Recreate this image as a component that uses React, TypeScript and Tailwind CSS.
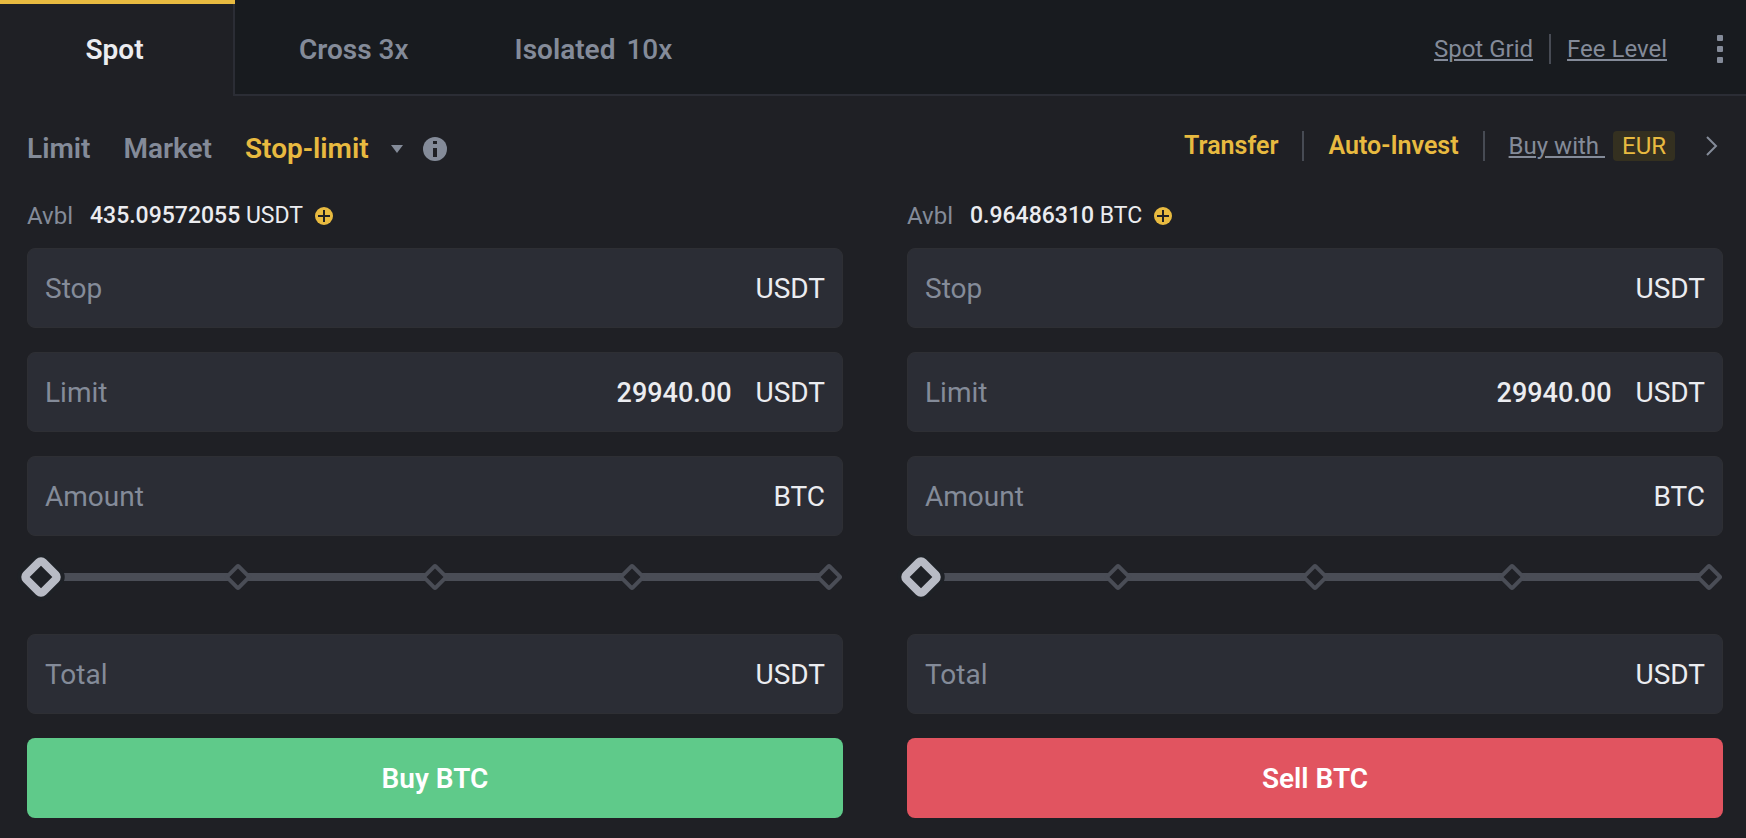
import { useState } from 'react';

interface Field {
  label: string;
  unit: string;
  value: string;
}

interface OrderFormProps {
  side: 'buy' | 'sell';
  balance: string;
  asset: string;
}

const beforeSlider: Field[] = [
  { label: 'Stop', unit: 'USDT', value: '' },
  { label: 'Limit', unit: 'USDT', value: '29940.00' },
  { label: 'Amount', unit: 'BTC', value: '' },
];

const afterSlider: Field[] = [{ label: 'Total', unit: 'USDT', value: '' }];

const marks = [0, 25, 50, 75, 100];

function FieldRow({ id, field }: { id: string; field: Field }) {
  return (
    <div className="flex h-20 items-center rounded-lg border border-[#2e2f34] bg-[#2b2d35] px-[17px] pt-0.5 text-[28px]">
      <label htmlFor={id} className="text-[#848b99]">
        {field.label}
      </label>
      <input
        id={id}
        type="text"
        defaultValue={field.value}
        className="mr-6 min-w-0 flex-1 bg-transparent text-right text-[27px] font-medium text-[#ebecf0] outline-none"
      />
      <span className="text-[#ebecf0]">{field.unit}</span>
    </div>
  );
}

function PercentSlider({ label }: { label: string }) {
  const [percent, setPercent] = useState(0);

  return (
    <div className="relative mt-[21px] mb-[37px] flex h-10 items-center px-[14px]">
      <div className="h-2 flex-1 bg-[#4a4d56]" />
      <div className="absolute inset-x-[14px] top-1/2">
        {marks.map((mark) => (
          <span
            key={mark}
            style={{ left: `${mark}%` }}
            className="absolute h-5 w-5 -translate-x-1/2 -translate-y-1/2 rotate-45 rounded-[3px] border-4 border-[#4a4d56] bg-[#1f2025]"
          />
        ))}
        <span
          style={{ left: `${percent}%` }}
          className="absolute h-8 w-8 -translate-x-1/2 -translate-y-1/2 rotate-45 rounded-[7px] border-8 border-[#b8bbc5] bg-[#1e2126] ring-4 ring-[#1e2126]"
        />
      </div>
      <input
        type="range"
        min={0}
        max={100}
        value={percent}
        aria-label={label}
        onChange={(e) => setPercent(Number(e.target.value))}
        className="absolute inset-0 h-full w-full cursor-pointer opacity-0"
      />
    </div>
  );
}

function OrderForm({ side, balance, asset }: OrderFormProps) {
  const isBuy = side === 'buy';

  return (
    <form onSubmit={(e) => e.preventDefault()}>
      <div className="flex h-8 items-center text-2xl">
        <span className="mr-[17px] text-[#848b99]">Avbl</span>
        <span className="mr-3 text-[23px] text-[#ebecf0]">
          <span className="font-medium">{balance}</span> {asset}
        </span>
        <button type="button" aria-label="Add funds" className="cursor-pointer">
          <svg width="18" height="18" viewBox="0 0 18 18">
            <circle cx="9" cy="9" r="9" fill="#e8ba40" />
            <path d="M9 3v12M3 9h12" stroke="#1f2025" strokeWidth="2" />
          </svg>
        </button>
      </div>

      <div className="mt-4 flex flex-col gap-6">
        {beforeSlider.map((field) => (
          <FieldRow key={field.label} id={`${side}-${field.label}`} field={field} />
        ))}
      </div>
      <PercentSlider label={isBuy ? 'Buy amount percent' : 'Sell amount percent'} />
      {afterSlider.map((field) => (
        <FieldRow key={field.label} id={`${side}-${field.label}`} field={field} />
      ))}

      <button
        type="submit"
        className={`mt-6 h-20 w-full cursor-pointer rounded-lg pt-0.5 text-[28px] font-semibold text-white ${
          isBuy ? 'bg-[#5fca8a]' : 'bg-[#e15460]'
        }`}
      >
        {isBuy ? 'Buy BTC' : 'Sell BTC'}
      </button>
    </form>
  );
}

export default function App() {
  return (
    <div className="min-h-screen bg-[#1f2025] font-['Roboto',sans-serif]">
      {/* Account tabs */}
      <header className="flex h-24 bg-[#181b1f] text-[28px] font-semibold">
        <div className="flex w-[235px] flex-col border-r-2 border-[#2b2d35] bg-[#1f2025]">
          <div className="-mr-0.5 h-1 bg-[#e8ba40]" />
          <button className="flex-1 cursor-pointer pr-1 text-[#ebecf0]">Spot</button>
        </div>
        <div className="flex flex-1 items-center border-b-2 border-[#2b2d35] pt-1 pr-[23px] text-[#848b99]">
          <button className="ml-16 cursor-pointer pt-0.5">
            Cross <span className="font-medium">3x</span>
          </button>
          <button className="ml-[106px] cursor-pointer pt-0.5">
            Isolated <span className="ml-1 font-medium">10x</span>
          </button>
          <div className="ml-auto flex items-center text-2xl font-normal">
            <a href="#grid" className="underline decoration-2 underline-offset-2">
              Spot Grid
            </a>
            <span className="mx-4 h-[30px] w-0.5 bg-[#474b54]" />
            <a href="#fees" className="underline decoration-2 underline-offset-2">
              Fee Level
            </a>
            <button aria-label="More" className="ml-[50px] cursor-pointer">
              <svg width="6" height="28" viewBox="0 0 6 28" fill="#848b99">
                <rect width="6" height="6" rx="1" />
                <rect y="11" width="6" height="6" rx="1" />
                <rect y="22" width="6" height="6" rx="1" />
              </svg>
            </button>
          </div>
        </div>
      </header>

      <main className="pt-[30px] pr-[23px] pb-5 pl-[27px]">
        {/* Order types and shortcuts */}
        <div className="flex items-center">
          <div className="flex h-10 items-center pt-1.5 text-[28px] font-semibold text-[#848b99]">
            <button className="mr-[33px] cursor-pointer">Limit</button>
            <button className="mr-[33px] cursor-pointer">Market</button>
            <button className="flex cursor-pointer items-center text-[#e8ba40]">
              Stop-limit
              <svg className="ml-[22px]" width="12" height="8" viewBox="0 0 12 8" fill="#848b99">
                <path d="M0 0h12L6 8z" />
              </svg>
            </button>
            <button aria-label="Order type info" className="ml-5 cursor-pointer">
              <svg width="24" height="24" viewBox="0 0 24 24">
                <circle cx="12" cy="12" r="12" fill="#848b99" />
                <path d="M10 4h4v3h-4zM10 11h4v9h-4z" fill="#1f2025" />
              </svg>
            </button>
          </div>
          <div className="ml-auto flex h-9 items-center text-2xl">
            <button className="cursor-pointer text-[25px] font-semibold text-[#e8ba40]">Transfer</button>
            <span className="mx-6 h-[30px] w-0.5 bg-[#474b54]" />
            <button className="cursor-pointer text-[25px] font-semibold text-[#e8ba40]">Auto-Invest</button>
            <span className="mx-6 h-[30px] w-0.5 bg-[#474b54]" />
            <a href="#buy" className="flex items-center text-[#848b99]">
              <span className="whitespace-pre underline decoration-2 underline-offset-2">Buy with </span>
              <span className="ml-2 rounded bg-[#343020] px-[9px] leading-[30px] text-[#e8ba40]">EUR</span>
              <svg className="mr-[5px] ml-[31px]" width="12" height="20" viewBox="0 0 12 20" fill="none">
                <path d="M1 1l9 9-9 9" stroke="#848b99" strokeWidth="2" />
              </svg>
            </a>
          </div>
        </div>

        <div className="mt-[34px] grid grid-cols-2 gap-16">
          <OrderForm side="buy" balance="435.09572055" asset="USDT" />
          <OrderForm side="sell" balance="0.96486310" asset="BTC" />
        </div>
      </main>
    </div>
  );
}
